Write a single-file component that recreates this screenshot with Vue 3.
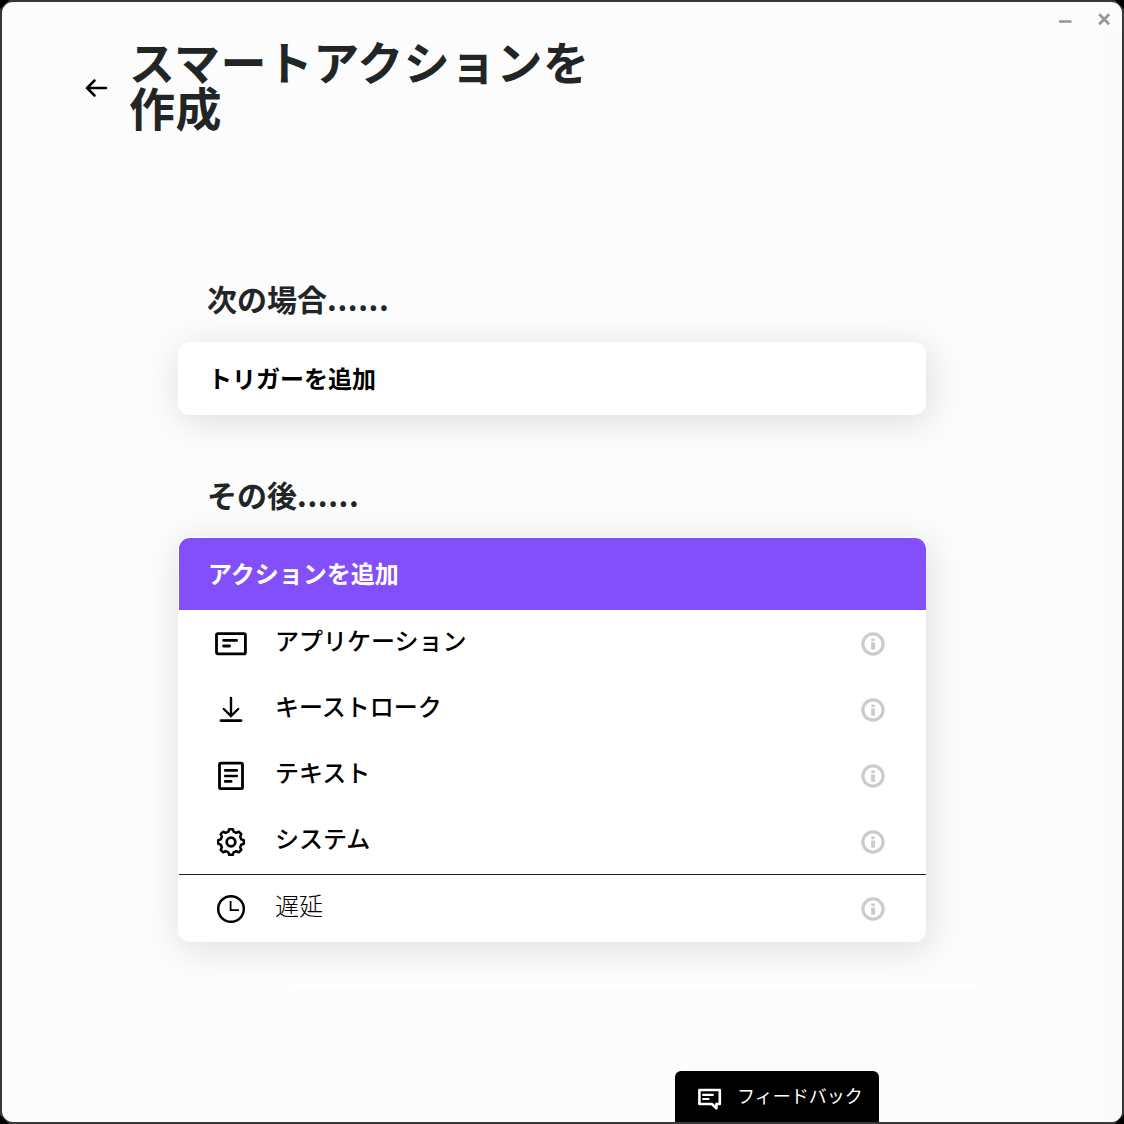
<script setup>
import { ref } from 'vue'

const actions = ref([
  { id: 'application', label: 'アプリケーション' },
  { id: 'keystroke', label: 'キーストローク' },
  { id: 'text', label: 'テキスト' },
  { id: 'system', label: 'システム' },
  { id: 'delay', label: '遅延', separated: true },
])
</script>

<template>
  <div class="frame">
    <div class="window">
      <div class="window-main">
        <header class="page-header">
          <button class="back-btn" aria-label="戻る">
            <svg width="24" height="20" viewBox="0 0 24 20">
              <path d="M22 10H3M10.5 2.5L3 10L10.5 17.5" fill="none" stroke="#000" stroke-width="2.5" stroke-linecap="round" />
            </svg>
          </button>
          <h1>スマートアクションを作成</h1>
        </header>

        <main class="content">
          <h2>次の場合<span class="dots">......</span></h2>
          <button class="card trigger">トリガーを追加</button>

          <h2 class="second">その後<span class="dots">......</span></h2>
          <section class="card">
            <div class="card-header">アクションを追加</div>
            <ul class="actions">
              <li v-for="action in actions" :key="action.id" :class="{ separated: action.separated }">
                <svg class="action-icon" width="32" height="32" viewBox="0 0 32 32" fill="none" stroke="#000">
                  <template v-if="action.id === 'application'">
                    <rect x="1.5" y="5.6" width="28.9" height="20.2" rx="1.4" stroke-width="2.8" />
                    <path d="M8.6 12.4h13M8.6 18h6" stroke-width="2.8" stroke-linecap="round" />
                  </template>
                  <template v-else-if="action.id === 'keystroke'">
                    <path d="M16 4v17.5M8.8 15l7.2 7 7.2-7" stroke-width="2.4" stroke-linecap="round" />
                    <path d="M6 26.6h20" stroke-width="2.8" stroke-linecap="round" />
                  </template>
                  <template v-else-if="action.id === 'text'">
                    <rect x="4.5" y="3.2" width="23" height="25.4" rx="1.4" stroke-width="2.8" />
                    <path d="M10.2 10.4h11.6M10.2 16h11.6M10.2 21.4h6" stroke-width="2.6" stroke-linecap="round" />
                  </template>
                  <template v-else-if="action.id === 'system'">
                    <path
                      d="M13.4 5.7L14.2 3.2H17.8L18.6 5.7L21.4 6.9L23.8 5.7L26.3 8.2L25.1 10.6L26.3 13.4L28.8 14.2V17.8L26.3 18.6L25.1 21.4L26.3 23.8L23.8 26.3L21.4 25.1L18.6 26.3L17.8 28.8H14.2L13.4 26.3L10.6 25.1L8.2 26.3L5.7 23.8L6.9 21.4L5.7 18.6L3.2 17.8V14.2L5.7 13.4L6.9 10.6L5.7 8.2L8.2 5.7L10.6 6.9Z"
                      stroke-width="2.5"
                      stroke-linejoin="round"
                    />
                    <circle cx="16" cy="16" r="4.3" stroke-width="2.7" />
                  </template>
                  <template v-else>
                    <circle cx="16" cy="16" r="12.8" stroke-width="2.5" />
                    <path d="M15.6 8v9.2h8.4" stroke-width="1.8" />
                  </template>
                </svg>
                <span class="label">{{ action.label }}</span>
                <svg class="info" width="24" height="24" viewBox="0 0 24 24">
                  <circle cx="12" cy="12" r="10.1" fill="none" stroke="#ccc" stroke-width="3.2" />
                  <ellipse cx="12" cy="7.8" rx="2" ry="1.5" fill="#ccc" />
                  <path d="M10.1 10.5h3.9v7.2h-3.9z" fill="#ccc" />
                </svg>
              </li>
            </ul>
          </section>
          <div class="bottom-line"></div>
        </main>
      </div>

      <div class="scroll-track"></div>

      <div class="window-controls">
        <svg width="52" height="16" viewBox="0 0 52 16" fill="none" stroke="#969696">
          <path d="M0 10.5h12.5" stroke-width="2.7" />
          <path d="M40.2 3.2l10 10M50.2 3.2l-10 10" stroke-width="2.7" />
        </svg>
      </div>

      <button class="feedback">
        <svg width="24" height="22" viewBox="0 0 24 22" fill="none" stroke="#fff">
          <path d="M1.4 2h20.4v14h-3.4v4.2l-4.6-4.2H1.4z" stroke-width="2.6" stroke-linejoin="round" />
          <path d="M5.2 6.9h9.6M5.2 11h5.4" stroke-width="2.2" stroke-linecap="round" />
        </svg>
        <span>フィードバック</span>
      </button>
    </div>
  </div>
</template>

<style>
body {
  background: #000;
}
</style>

<style scoped>
.frame {
  box-sizing: border-box;
  height: 1124px;
  padding: 2px;
  background: linear-gradient(135deg, #000 0, #000 6px, transparent 7px),
    linear-gradient(225deg, #000 0, #000 6px, transparent 7px),
    linear-gradient(45deg, #000 0, #000 6px, transparent 7px),
    linear-gradient(315deg, #000 0, #000 6px, transparent 7px), #38383a;
  font-family: 'Noto Sans CJK JP', 'Noto Sans', sans-serif;
}

.window {
  position: relative;
  display: flex;
  height: 1120px;
  overflow: hidden;
  border-radius: 11px;
  background: #fcfcfc;
}

.window-main {
  flex: 1;
}

.scroll-track {
  width: 16px;
  margin-top: 31px;
  background: #fafafa;
}

button {
  border: none;
  padding: 0;
  font-family: inherit;
  cursor: pointer;
}

.window-controls {
  position: absolute;
  top: 9px;
  right: 11px;
  display: flex;
}

.page-header {
  display: flex;
  align-items: center;
  padding: 35px 0 0 82px;
}

.back-btn {
  display: flex;
  width: 45px;
  margin-top: 10px;
  background: none;
}

h1 {
  width: 475px;
  margin: 0;
  color: #222526;
  font-size: 46px;
  font-weight: 700;
  letter-spacing: 0.4px;
  line-height: 46px;
}

.content {
  width: 748px;
  margin: 148px 0 0 176px;
}

h2 {
  margin: 0 0 22px 29px;
  color: #222526;
  font-size: 30px;
  font-weight: 700;
  line-height: 43px;
}

h2.second {
  margin-top: 58px;
  margin-bottom: 21px;
}

.dots {
  letter-spacing: 0.65px;
}

.card {
  box-sizing: border-box;
  width: 748px;
  overflow: hidden;
  border-radius: 12px;
  background: #fff;
  box-shadow: 3px 6px 36px rgba(0, 0, 0, 0.13);
}

.trigger {
  display: flex;
  align-items: center;
  height: 73px;
  padding: 0 0 2px 30px;
  color: #000;
  font-size: 24px;
  font-weight: 700;
}

section.card {
  padding: 1px 0 1px 1px;
}

.card-header {
  height: 72px;
  padding-left: 29px;
  border-radius: 11px 11px 0 0;
  background: #834ffb;
  color: #fff;
  font-size: 24px;
  font-weight: 700;
  line-height: 70px;
}

.actions {
  margin: 0;
  padding: 0;
  list-style: none;
}

.actions li {
  display: flex;
  align-items: center;
  box-sizing: border-box;
  height: 66px;
  padding: 2px 41px 0 36px;
}

.actions li.separated {
  height: 67px;
  border-top: 1px solid #222;
}

.label {
  flex: 1;
  margin-left: 28px;
  padding-bottom: 8px;
  color: #000;
  font-size: 24px;
  font-weight: 500;
  line-height: 30px;
}

.separated .label {
  font-weight: 300;
}

.bottom-line {
  height: 4px;
  width: 686px;
  margin: 42px 0 0 114px;
  background: #fff;
}

.feedback {
  position: absolute;
  left: 673px;
  bottom: 0;
  display: flex;
  align-items: center;
  width: 204px;
  height: 51px;
  padding: 0 0 0 23px;
  border-radius: 6px 6px 0 0;
  background: #000;
  color: #fff;
  font-size: 18px;
}

.feedback svg {
  margin-top: 5px;
}

.feedback span {
  margin-left: 15px;
  padding-bottom: 3px;
}
</style>
